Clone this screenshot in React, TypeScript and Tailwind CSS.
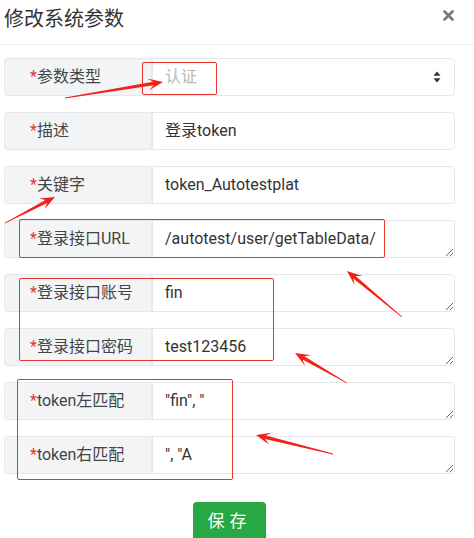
import React from "react";

type Field = { label: string; value: string; kind: "select" | "input" | "textarea" };

const fields: Field[] = [
  { label: "参数类型", value: "认证", kind: "select" },
  { label: "描述", value: "登录token", kind: "input" },
  { label: "关键字", value: "token_Autotestplat", kind: "input" },
  { label: "登录接口URL", value: "/autotest/user/getTableData/", kind: "textarea" },
  { label: "登录接口账号", value: "fin", kind: "textarea" },
  { label: "登录接口密码", value: "test123456", kind: "textarea" },
  { label: "token左匹配", value: '"fin", "', kind: "textarea" },
  { label: "token右匹配", value: '", "A', kind: "textarea" },
];

// annotation arrows: tail -> tip
const arrows = [
  [65, 98, 163, 82],
  [5, 223, 55, 197],
  [402, 317, 347, 271],
  [347, 383, 295, 353],
  [333, 454, 256, 435],
];

function arrowPoints(tx: number, ty: number, hx: number, hy: number) {
  const len = Math.hypot(hx - tx, hy - ty);
  const dx = (hx - tx) / len;
  const dy = (hy - ty) / len;
  const nx = -dy;
  const ny = dx;
  const L = 15;
  const W = 6;
  const pt = (d: number, n: number) =>
    `${(hx - dx * d + nx * n).toFixed(1)},${(hy - dy * d + ny * n).toFixed(1)}`;
  return [
    `${tx - nx * 0.4},${ty - ny * 0.4}`,
    pt(L * 0.65, -1.8),
    pt(L, -W),
    `${hx},${hy}`,
    pt(L, W),
    pt(L * 0.65, 1.8),
    `${tx + nx * 0.4},${ty + ny * 0.4}`,
  ].join(" ");
}

function Row({ field }: { field: Field }) {
  return (
    <div className="flex h-[38px] w-[451px]">
      <div className="flex w-[148px] shrink-0 items-center rounded-l-[4px] border border-[#e6e7ea] bg-[#f3f4f6] pl-[25px] text-[16px] text-[#444]">
        <span className="text-[#f03030]">*</span>
        {field.label}
      </div>
      {field.kind === "select" && (
        <div className="flex w-[303px] shrink-0 items-center justify-between rounded-r-[4px] border border-[#e6e7ea] bg-white pl-[12px] pr-[13px] text-[16px] text-[#b8b8b8]">
          <span>{field.value}</span>
          <svg width="8" height="12" viewBox="0 0 8 12">
            <path d="M4 0.5 L7.5 4.8 H0.5 Z" fill="#333" />
            <path d="M4 11.5 L7.5 7.2 H0.5 Z" fill="#333" />
          </svg>
        </div>
      )}
      {field.kind === "input" && (
        <input
          readOnly
          defaultValue={field.value}
          className="w-[303px] shrink-0 rounded-r-[4px] border border-[#e6e7ea] bg-white pl-[12px] text-[16px] text-[#333] outline-none"
        />
      )}
      {field.kind === "textarea" && (
        <textarea
          readOnly
          defaultValue={field.value}
          className="h-[38px] w-[303px] shrink-0 resize-y overflow-hidden rounded-r-[4px] border border-[#e6e7ea] bg-white pl-[12px] pt-[6px] text-[16px] leading-[24px] text-[#333] outline-none"
        />
      )}
    </div>
  );
}

export default function App() {
  return (
    <div
      className="relative h-[538px] w-[474px] overflow-hidden bg-white"
      style={{ fontFamily: "Roboto, 'Noto Sans CJK SC', sans-serif" }}
    >
      <div className="flex h-[45px] items-start justify-between border-b border-[#ececec] pl-[4px] pr-[20px] pt-[5px]">
        <h2 className="text-[20px] leading-[28px] text-[#333]">修改系统参数</h2>
        <svg width="11" height="11" viewBox="0 0 11 11" className="mt-[5px]">
          <path d="M1.5 1.5 L9.5 9.5 M9.5 1.5 L1.5 9.5" stroke="#7a7a7a" strokeWidth="2.6" strokeLinecap="round" />
        </svg>
      </div>

      <div className="flex flex-col gap-4 pl-[4px] pt-[13px]">
        {fields.map((f) => (
          <Row key={f.label} field={f} />
        ))}
      </div>

      <div className="mt-[28px] flex justify-center pr-[15px]">
        <button className="h-[40px] w-[73px] rounded-[4px] bg-[#28a745] text-[17px] tracking-[5px] text-white">
          保存
        </button>
      </div>

      {/* red annotations */}
      <div className="absolute left-[142px] top-[62px] h-[33px] w-[75px] rounded-[2px] border-[1.5px] border-[#e8322c]" />
      <div className="absolute left-[19px] top-[219px] h-[39px] w-[366px] rounded-[2px] border-[1.5px] border-[#e8322c]" />
      <div className="absolute left-[19px] top-[278px] h-[83px] w-[255px] rounded-[2px] border-[1.5px] border-[#e8322c]" />
      <div className="absolute left-[17px] top-[379px] h-[101px] w-[216px] rounded-[2px] border-[1.5px] border-[#e8322c]" />
      <svg className="pointer-events-none absolute left-0 top-0" width="474" height="538">
        {arrows.map(([tx, ty, hx, hy], i) => (
          <polygon key={i} points={arrowPoints(tx, ty, hx, hy)} fill="#f4201a" />
        ))}
      </svg>
    </div>
  );
}
